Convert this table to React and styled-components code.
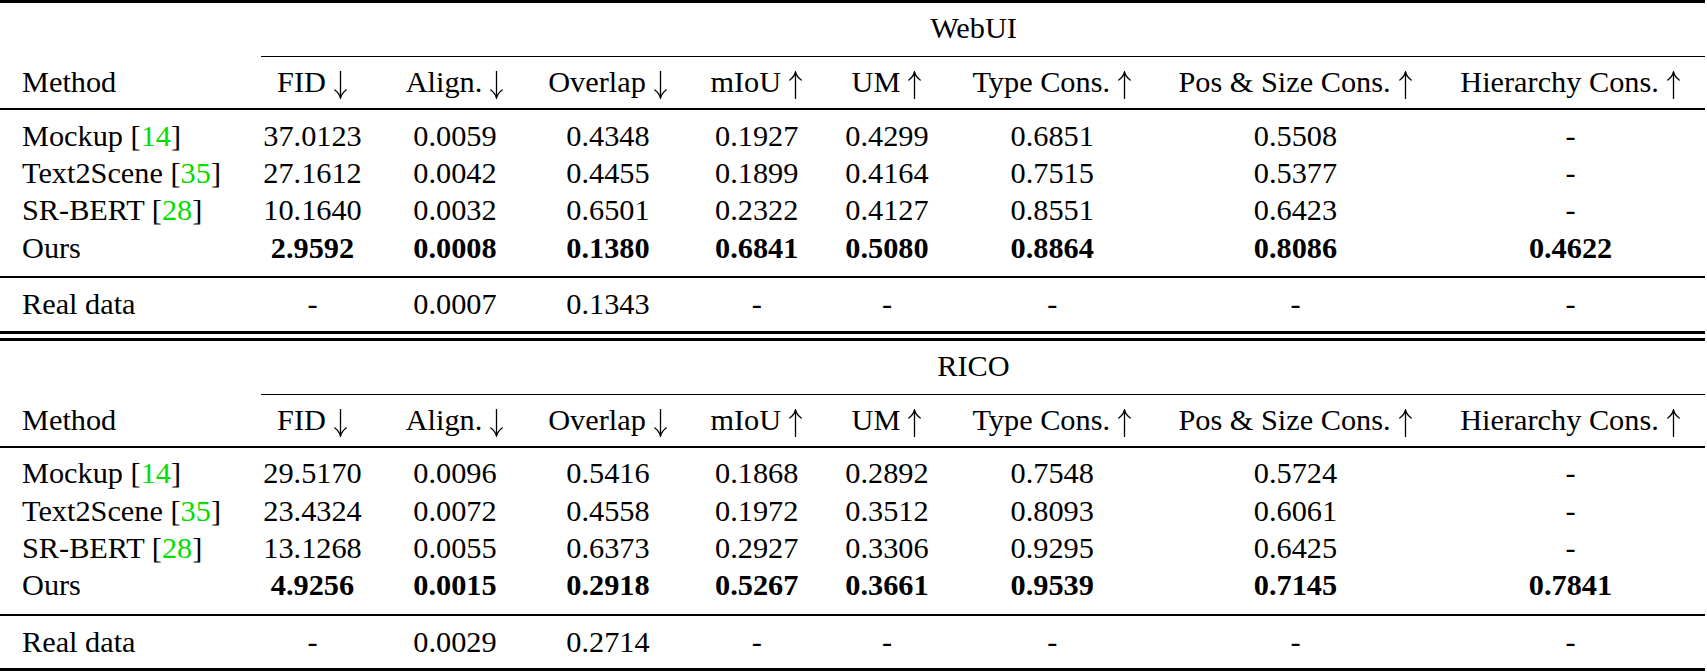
import styled, { createGlobalStyle } from 'styled-components';

const GlobalStyle = createGlobalStyle`
  html, body {
    margin: 0;
    padding: 0;
    background: #fff;
  }
`;

const COLUMNS = [242, 141, 144, 162, 135.5, 125, 205.5, 281, 269];

const HEADERS = [
  ['FID', 'down'],
  ['Align.', 'down'],
  ['Overlap', 'down'],
  ['mIoU', 'up'],
  ['UM', 'up'],
  ['Type Cons.', 'up'],
  ['Pos & Size Cons.', 'up'],
  ['Hierarchy Cons.', 'up'],
];

const SECTIONS = [
  {
    name: 'WebUI',
    rows: [
      { method: 'Mockup', cite: '14', values: ['37.0123', '0.0059', '0.4348', '0.1927', '0.4299', '0.6851', '0.5508', '-'] },
      { method: 'Text2Scene', cite: '35', values: ['27.1612', '0.0042', '0.4455', '0.1899', '0.4164', '0.7515', '0.5377', '-'] },
      { method: 'SR-BERT', cite: '28', values: ['10.1640', '0.0032', '0.6501', '0.2322', '0.4127', '0.8551', '0.6423', '-'] },
      { method: 'Ours', bold: true, values: ['2.9592', '0.0008', '0.1380', '0.6841', '0.5080', '0.8864', '0.8086', '0.4622'] },
    ],
    real: ['-', '0.0007', '0.1343', '-', '-', '-', '-', '-'],
  },
  {
    name: 'RICO',
    rows: [
      { method: 'Mockup', cite: '14', values: ['29.5170', '0.0096', '0.5416', '0.1868', '0.2892', '0.7548', '0.5724', '-'] },
      { method: 'Text2Scene', cite: '35', values: ['23.4324', '0.0072', '0.4558', '0.1972', '0.3512', '0.8093', '0.6061', '-'] },
      { method: 'SR-BERT', cite: '28', values: ['13.1268', '0.0055', '0.6373', '0.2927', '0.3306', '0.9295', '0.6425', '-'] },
      { method: 'Ours', bold: true, values: ['4.9256', '0.0015', '0.2918', '0.5267', '0.3661', '0.9539', '0.7145', '0.7841'] },
    ],
    real: ['-', '0.0029', '0.2714', '-', '-', '-', '-', '-'],
  },
];

const Page = styled.div`
  display: flex;
  flex-direction: column;
  gap: 4px;
  width: 1705px;
`;

const Table = styled.table`
  width: 1705px;
  table-layout: fixed;
  border-collapse: separate;
  border-spacing: 0;
  border-top: 3px solid #000;
  border-bottom: 3px solid #000;
  font-family: 'Liberation Serif', 'Times New Roman', serif;
  font-size: 30.3px;
  line-height: 37.4px;
  color: #000;
`;

const Cell = styled.td`
  padding: ${(p) => p.$pt || 0}px 0 ${(p) => p.$pb || 0}px ${(p) => (p.$left ? 22 : 0)}px;
  text-align: ${(p) => (p.$left ? 'left' : 'center')};
  font-weight: ${(p) => (p.$bold ? 700 : 400)};
  border-bottom: ${(p) => (p.$rule ? `${p.$rule}px solid #000` : 'none')};
  white-space: nowrap;
`;

const RuleCell = styled.td`
  padding: 0;
  height: 1px;
  line-height: 0;
  font-size: 0;
`;

const CmidLine = styled.div`
  margin-left: 18.7px;
  height: 1px;
  background: #000;
`;

const Cite = styled.span`
  color: #00dd00;
`;

const ArrowSvg = styled.svg`
  display: inline-block;
  width: 15px;
  height: 28px;
  margin-left: 7px;
  vertical-align: -7px;
`;

function Arrow({ dir }) {
  const up = dir === 'up';
  return (
    <ArrowSvg viewBox="0 0 15 28" fill="none" stroke="#000" strokeWidth="1.3" strokeLinecap="round">
      {up ? (
        <>
          <path d="M7.5 1.5 V27.5" />
          <path d="M1.8 9 C4.6 7 6.6 4.4 7.5 1 C8.4 4.4 10.4 7 13.2 9" />
        </>
      ) : (
        <>
          <path d="M7.5 0.5 V26.5" />
          <path d="M1.8 19 C4.6 21 6.6 23.6 7.5 27 C8.4 23.6 10.4 21 13.2 19" />
        </>
      )}
    </ArrowSvg>
  );
}

function Method({ row }) {
  if (!row.cite) return row.method;
  return (
    <>
      {row.method} [<Cite>{row.cite}</Cite>]
    </>
  );
}

function Section({ section }) {
  const last = section.rows.length - 1;
  return (
    <Table>
      <colgroup>
        {COLUMNS.map((w, i) => <col key={i} style={{ width: `${w}px` }} />)}
      </colgroup>
      <tbody>
        <tr>
          <Cell $pt={7} $pb={9} />
          <Cell colSpan={8} $pt={7} $pb={9}>{section.name}</Cell>
        </tr>
        <tr>
          <RuleCell />
          <RuleCell colSpan={8}><CmidLine /></RuleCell>
        </tr>
        <tr>
          <Cell $left $pt={7} $pb={6.3} $rule={2}>Method</Cell>
          {HEADERS.map(([label, dir]) => (
            <Cell key={label} $pt={7} $pb={6.3} $rule={2}>
              {label}
              <Arrow dir={dir} />
            </Cell>
          ))}
        </tr>
        {section.rows.map((row, i) => {
          const pt = i === 0 ? 7.5 : 0;
          const pb = i === last ? 9 : 0;
          const rule = i === last ? 2 : 0;
          return (
            <tr key={row.method}>
              <Cell $left $pt={pt} $pb={pb} $rule={rule}><Method row={row} /></Cell>
              {row.values.map((v, j) => (
                <Cell key={j} $pt={pt} $pb={pb} $rule={rule} $bold={row.bold}>{v}</Cell>
              ))}
            </tr>
          );
        })}
        <tr>
          <Cell $left $pt={7.8} $pb={7.1}>Real data</Cell>
          {section.real.map((v, j) => (
            <Cell key={j} $pt={7.8} $pb={7.1}>{v}</Cell>
          ))}
        </tr>
      </tbody>
    </Table>
  );
}

export default function App() {
  return (
    <>
      <GlobalStyle />
      <Page>
        {SECTIONS.map((s) => <Section key={s.name} section={s} />)}
      </Page>
    </>
  );
}
